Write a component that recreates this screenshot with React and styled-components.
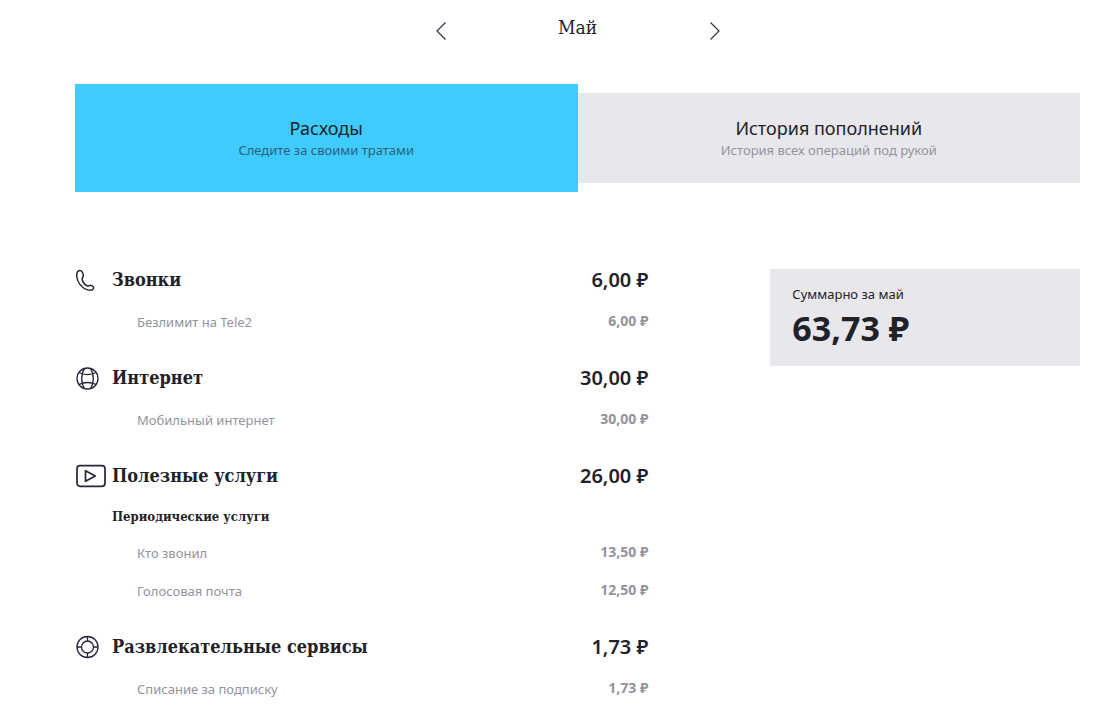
import React, { useState } from 'react';
import styled, { createGlobalStyle } from 'styled-components';

const GlobalStyle = createGlobalStyle`
  * {
    box-sizing: border-box;
  }

  body {
    margin: 0;
    background: #fff;
    color: #1f2229;
    font-family: 'Noto Sans', 'Open Sans', sans-serif;
  }

  button {
    border: 0;
    font-family: inherit;
    color: inherit;
    cursor: pointer;
  }
`

const slab = `'DejaVu Serif Condensed', 'DejaVu Serif', serif`;

const Page = styled.main`
  padding: 12px 29px 0 75px;
`

const MonthNav = styled.nav`
  display: flex;
  align-items: center;
  justify-content: space-between;
  width: 298px;
  margin: 0 auto;
`

const ArrowButton = styled.button`
  display: flex;
  padding: 8px 6px 0;
  background: none;
`

const Month = styled.h1`
  margin: 0;
  font-family: ${slab};
  font-size: 19px;
  line-height: 30px;
  font-weight: 400;
`

const Tabs = styled.div`
  display: grid;
  grid-template-columns: 1fr 1fr;
  align-items: center;
  margin-top: 42px;
`

const Tab = styled.button`
  display: flex;
  flex-direction: column;
  align-items: center;
  padding: ${({ $active }) => ($active ? '32px 16px' : '23px 16px')};
  background: ${({ $active }) => ($active ? '#40cbff' : '#e8e7ec')};
`

const TabTitle = styled.span`
  font-size: 18px;
  line-height: 24px;
`

const TabHint = styled.span`
  font-size: 13px;
  line-height: 20px;
  color: ${({ $active }) => ($active ? '#2c6179' : '#92939e')};
`

const Content = styled.div`
  display: grid;
  grid-template-columns: 574fr 310fr;
  column-gap: 122px;
  align-items: start;
  margin-top: 73px;
`

const Group = styled.section`
  margin-bottom: 23px;
`

const GroupHeader = styled.header`
  display: grid;
  grid-template-columns: 37px 1fr auto;
  align-items: center;
  height: 30px;

  svg {
    display: block;
  }
`

const GroupTitle = styled.h2`
  margin: 0;
  font-family: ${slab};
  font-size: 18px;
  line-height: 30px;
  font-weight: 700;
`

const GroupAmount = styled.span`
  font-size: 20px;
  line-height: 30px;
  font-weight: 600;
`

const Subtitle = styled.h3`
  margin: 9px 0 2px 37px;
  font-family: ${slab};
  font-size: 13px;
  line-height: 33px;
  font-weight: 700;
`

const Items = styled.ul`
  display: grid;
  row-gap: 2px;
  margin: ${({ $nested }) => ($nested ? '0' : '9px 0 0')};
  padding: 0 0 0 62px;
  list-style: none;
`

const Item = styled.li`
  display: flex;
  justify-content: space-between;
  font-size: 13px;
  line-height: 36px;
  color: #92939e;
`

const ItemAmount = styled.span`
  font-size: 14px;
  font-weight: 700;
  line-height: 34px;
`

const Summary = styled.aside`
  margin-top: 4px;
  padding: 14px 22px 15px;
  background: #e8e7ec;
`

const SummaryLabel = styled.div`
  font-size: 13px;
  line-height: 22px;
`

const SummaryAmount = styled.div`
  font-size: 34px;
  line-height: 46px;
  font-weight: 700;
`

const stroke = { fill: 'none', stroke: '#2b2338', strokeWidth: 1.5, strokeLinejoin: 'round' };

const PhoneIcon = () => (
  <svg width="24" height="24" viewBox="0 0 24 24" aria-hidden="true" {...stroke}>
    <path d="M4.600 2.400C2.300 2.800 1.500 5.600 1.800 8.800c.5 5.600 5.200 11.600 10.800 13.100 2.600.7 5.300.3 5.900-1.300.5-1.500-.7-2.700-2.300-3.200-1.500-.4-2.300 1-3.600.6-2.700-.9-5.200-4.200-5.500-6.900-.1-1.400 1.300-1.800 1.200-3.400-.1-2.200-1.300-5.500-3.700-5.300z" />
  </svg>
);

const GlobeIcon = () => (
  <svg width="24" height="24" viewBox="0 0 24 24" aria-hidden="true" {...stroke} strokeWidth="1.3">
    <circle cx="12.500" cy="12.500" r="10.500" />
    <path d="M9.500 2.500C5.800 8 5.800 17 9.500 22.500M15.500 2.500c3.700 5.500 3.700 14.500 0 20" />
    <path d="M4 6.500c5 2.700 12 2.700 17 0M4 18.500c5-2.700 12-2.700 17 0" />
  </svg>
);

const PlayIcon = () => (
  <svg width="31" height="24" viewBox="0 0 31 24" aria-hidden="true" {...stroke} strokeWidth="1.7">
    <rect x="2" y="1.700" width="28" height="20.600" rx="3" />
    <path d="M10.500 6.700v10.600l9.800-5.300z" />
  </svg>
);

const RingIcon = () => (
  <svg width="24" height="24" viewBox="0 0 24 24" aria-hidden="true" {...stroke} strokeWidth="1.3">
    <circle cx="12.500" cy="12" r="10.500" />
    <circle cx="12.500" cy="12" r="6" />
    <path d="M12.500 1.500V6M12.500 18v4.500M2 12h4.500M18.500 12H23" />
  </svg>
);

const Arrow = ({ d }) => (
  <svg width="12" height="20" viewBox="0 0 12 20" aria-hidden="true" fill="none" stroke="#3a2c48" strokeWidth="1.2">
    <path d={d} />
  </svg>
);

const groups = [
  {
    title: 'Звонки',
    amount: '6,00 ₽',
    icon: <PhoneIcon />,
    items: [['Безлимит на Tele2', '6,00 ₽']],
  },
  {
    title: 'Интернет',
    amount: '30,00 ₽',
    icon: <GlobeIcon />,
    items: [['Мобильный интернет', '30,00 ₽']],
  },
  {
    title: 'Полезные услуги',
    amount: '26,00 ₽',
    icon: <PlayIcon />,
    subtitle: 'Периодические услуги',
    items: [['Кто звонил', '13,50 ₽'], ['Голосовая почта', '12,50 ₽']],
  },
  {
    title: 'Развлекательные сервисы',
    amount: '1,73 ₽',
    icon: <RingIcon />,
    items: [['Списание за подписку', '1,73 ₽']],
  },
];

const tabs = [
  ['Расходы', 'Следите за своими тратами'],
  ['История пополнений', 'История всех операций под рукой'],
];

const App = () => {
  const [active, setActive] = useState(0);

  return (
    <Page>
      <GlobalStyle />
      <MonthNav>
        <ArrowButton aria-label="Предыдущий месяц">
          <Arrow d="M10.500 1.500L2 10l8.500 8.500" />
        </ArrowButton>
        <Month>Май</Month>
        <ArrowButton aria-label="Следующий месяц">
          <Arrow d="M1.500 1.500L10 10l-8.500 8.500" />
        </ArrowButton>
      </MonthNav>

      <Tabs>
        {tabs.map(([title, hint], i) => (
          <Tab key={title} $active={i === active} onClick={() => setActive(i)}>
            <TabTitle>{title}</TabTitle>
            <TabHint $active={i === active}>{hint}</TabHint>
          </Tab>
        ))}
      </Tabs>

      <Content>
        <div>
          {groups.map((group) => (
            <Group key={group.title}>
              <GroupHeader>
                {group.icon}
                <GroupTitle>{group.title}</GroupTitle>
                <GroupAmount>{group.amount}</GroupAmount>
              </GroupHeader>
              {group.subtitle && <Subtitle>{group.subtitle}</Subtitle>}
              <Items $nested={Boolean(group.subtitle)}>
                {group.items.map(([name, amount]) => (
                  <Item key={name}>
                    <span>{name}</span>
                    <ItemAmount>{amount}</ItemAmount>
                  </Item>
                ))}
              </Items>
            </Group>
          ))}
        </div>
        <Summary>
          <SummaryLabel>Суммарно за май</SummaryLabel>
          <SummaryAmount>63,73 ₽</SummaryAmount>
        </Summary>
      </Content>
    </Page>
  );
};
export default App;
